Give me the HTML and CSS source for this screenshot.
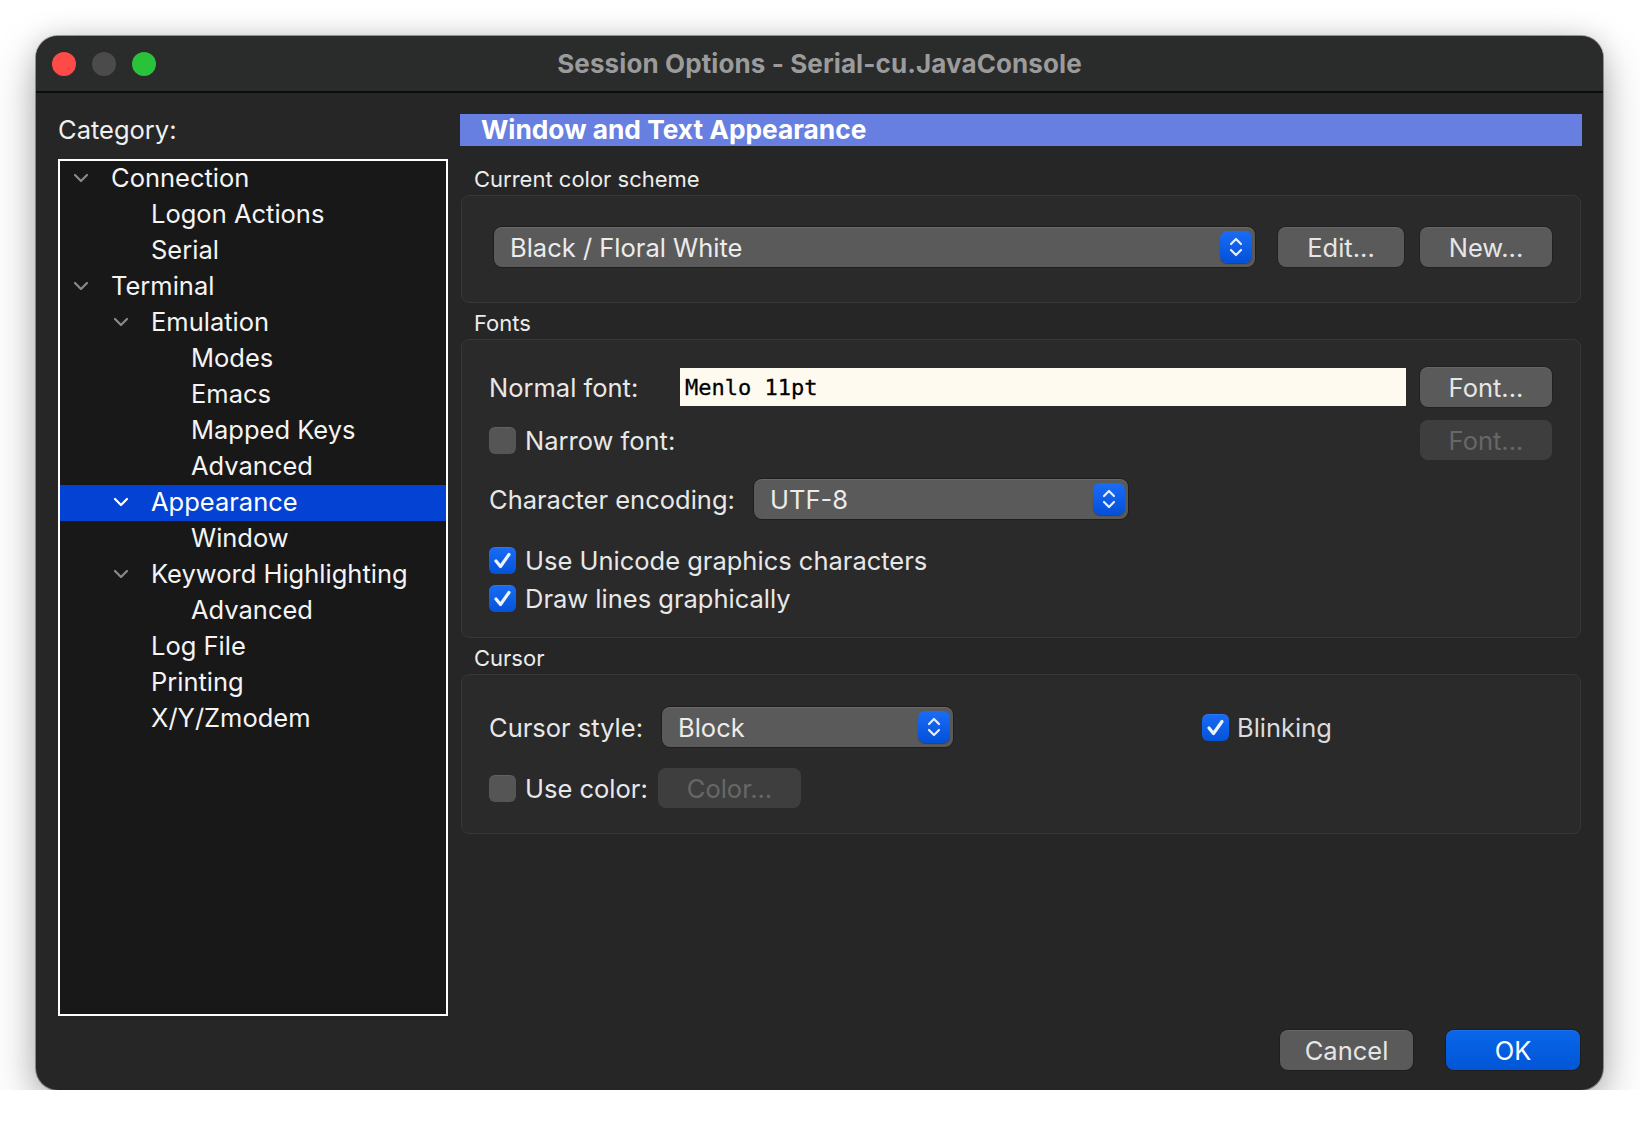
FILE: index.html
```html
<!DOCTYPE html>
<html lang="en">
<head>
  <meta charset="UTF-8">
  <title>Session Options - Serial-cu.JavaConsole</title>
  <link rel="stylesheet" href="styles.css">
</head>
<body>
  <div class="window">
    <div class="titlebar">
      <div class="lights">
        <span class="light close"></span>
        <span class="light min"></span>
        <span class="light zoom"></span>
      </div>
      <div class="title">Session Options - Serial-cu.JavaConsole</div>
      <div></div>
    </div>

    <div class="body">
      <div class="side">
        <div class="cat-label">Category:</div>
        <div class="tree">
          <div class="row lvl0"><svg class="chev" viewBox="0 0 16 10"><polyline points="2,2 8,8 14,2"/></svg>Connection</div>
          <div class="row lvl1"><span class="chev"></span>Logon Actions</div>
          <div class="row lvl1"><span class="chev"></span>Serial</div>
          <div class="row lvl0"><svg class="chev" viewBox="0 0 16 10"><polyline points="2,2 8,8 14,2"/></svg>Terminal</div>
          <div class="row lvl1"><svg class="chev" viewBox="0 0 16 10"><polyline points="2,2 8,8 14,2"/></svg>Emulation</div>
          <div class="row lvl2"><span class="chev"></span>Modes</div>
          <div class="row lvl2"><span class="chev"></span>Emacs</div>
          <div class="row lvl2"><span class="chev"></span>Mapped Keys</div>
          <div class="row lvl2"><span class="chev"></span>Advanced</div>
          <div class="row lvl1 selected"><svg class="chev" viewBox="0 0 16 10"><polyline points="2,2 8,8 14,2"/></svg>Appearance</div>
          <div class="row lvl2"><span class="chev"></span>Window</div>
          <div class="row lvl1"><svg class="chev" viewBox="0 0 16 10"><polyline points="2,2 8,8 14,2"/></svg>Keyword Highlighting</div>
          <div class="row lvl2"><span class="chev"></span>Advanced</div>
          <div class="row lvl1"><span class="chev"></span>Log File</div>
          <div class="row lvl1"><span class="chev"></span>Printing</div>
          <div class="row lvl1"><span class="chev"></span>X/Y/Zmodem</div>
        </div>
      </div>

      <div class="main">
        <div class="pane-head">Window and Text Appearance</div>

        <div class="group-label first">Current color scheme</div>
        <div class="group scheme">
          <div class="popup grow">
            Black / Floral White
            <svg class="stepper" viewBox="0 0 32 32"><polyline points="11,13 16,8 21,13"/><polyline points="11,19 16,24 21,19"/></svg>
          </div>
          <div class="btn edit">Edit...</div>
          <div class="btn new">New...</div>
        </div>

        <div class="group-label">Fonts</div>
        <div class="group fonts">
          <div class="line h40">
            <div class="lbl normal">Normal font:</div>
            <div class="field">Menlo 11pt</div>
            <div class="btn font">Font...</div>
          </div>
          <div class="line h40 narrow">
            <span class="check"></span><span class="lbl">Narrow font:</span>
            <div class="btn font disabled push">Font...</div>
          </div>
          <div class="line h40 encoding">
            <div class="lbl enc">Character encoding:</div>
            <div class="popup w-enc">
              UTF-8
              <svg class="stepper" viewBox="0 0 32 32"><polyline points="11,13 16,8 21,13"/><polyline points="11,19 16,24 21,19"/></svg>
            </div>
          </div>
          <div class="line h28 unicode">
            <span class="check on"><svg viewBox="0 0 27 27"><polyline points="7,14 11.5,19.5 20,7.5"/></svg></span><span class="lbl">Use Unicode graphics characters</span>
          </div>
          <div class="line h28 lines">
            <span class="check on"><svg viewBox="0 0 27 27"><polyline points="7,14 11.5,19.5 20,7.5"/></svg></span><span class="lbl">Draw lines graphically</span>
          </div>
        </div>

        <div class="group-label">Cursor</div>
        <div class="group cursor">
          <div class="line h40">
            <div class="lbl cstyle">Cursor style:</div>
            <div class="popup w-block">
              Block
              <svg class="stepper" viewBox="0 0 32 32"><polyline points="11,13 16,8 21,13"/><polyline points="11,19 16,24 21,19"/></svg>
            </div>
            <span class="check on blink"><svg viewBox="0 0 27 27"><polyline points="7,14 11.5,19.5 20,7.5"/></svg></span><span class="lbl soft">Blinking</span>
          </div>
          <div class="line h40 usecolor">
            <span class="check"></span><span class="lbl ucolor">Use color:</span>
            <div class="btn color disabled">Color...</div>
          </div>
        </div>

        <div class="actions">
          <div class="btn cancel">Cancel</div>
          <div class="btn primary ok">OK</div>
        </div>
      </div>
    </div>
  </div>
  <div class="watermark">CSDN @浪浪山上的搬砖工</div>
</body>
</html>
```

FILE: styles.css
```css
*{box-sizing:border-box;}
body{margin:0;background:#fff;font-family:Inter,"Noto Sans",sans-serif;color:#e8e8e8;}

/* window frame */
.window{margin:36px 0 0 36px;width:1567px;height:1054px;border-radius:22px;background:#262626;display:flex;flex-direction:column;overflow:hidden;box-shadow:0 0 0 1px rgba(0,0,0,.35),0 18px 46px rgba(0,0,0,.3),0 0 24px rgba(0,0,0,.12);}
.titlebar{height:57px;flex:none;background:#2a2b2b;border-bottom:2px solid #0b0b0b;display:grid;grid-template-columns:1fr auto 1fr;align-items:center;padding:0 16px;}
.lights{display:flex;gap:16px;}
.light{width:24px;height:24px;border-radius:50%;}
.close{background:#fe4b47;}
.min{background:#4b4b4b;}
.zoom{background:#2ac13b;}
.title{font-weight:700;font-size:26px;color:#9b9b9b;letter-spacing:.1px;}

.body{flex:1;display:flex;padding:21px 21px 20px 22px;}

/* category tree */
.side{width:390px;margin-right:12px;flex:none;}
.cat-label{font-size:25.5px;line-height:32px;margin-bottom:13px;color:#f0f0f0;}
.tree{height:857px;border:2px solid #fff;background:#181818;padding-top:0;}
.row{height:36px;display:flex;align-items:center;font-size:25.5px;line-height:32px;color:#f4f4f4;white-space:nowrap;padding-bottom:2px;}
.row .chev{width:16px;height:10px;flex:none;margin-right:22px;}
.chev polyline{fill:none;stroke:#8a8a8a;stroke-width:2.2;stroke-linecap:round;stroke-linejoin:round;}
.lvl0{padding-left:13px;}
.lvl1{padding-left:53px;}
.lvl2{padding-left:93px;}
.row.selected{background:#0342d3;color:#fff;}
.row.selected .chev polyline{stroke:#fff;}

/* options pane */
.main{flex:1;display:flex;flex-direction:column;}
.pane-head{height:32px;line-height:32px;background:#667fe0;color:#fff;font-weight:700;font-size:26.3px;padding-left:21px;}
.group-label{font-size:22px;line-height:26px;margin:7px 0 3px 14px;color:#ececec;}
.group-label.first{margin-top:20px;}
.group{margin:0 1px;border:1px solid #373737;border-radius:8px;background:#2a2a2a;}

.scheme{display:flex;align-items:center;padding:31px 28px 35px 32px;}
.fonts{padding:27px 28px 25px 27px;}
.cursor{padding:32px 28px 25px 27px;}

.line{display:flex;align-items:center;}
.h40{height:40px;}
.h28{height:28px;}
.narrow{margin-top:13px;}
.encoding{margin-top:19px;}
.unicode{margin-top:27px;}
.lines{margin-top:10px;}
.usecolor{margin-top:21px;}

.lbl{font-size:25.5px;color:#e8e8e8;white-space:nowrap;}
.lbl.soft{color:#dcdcdc;}
.normal{width:191px;flex:none;}
.enc{width:265px;flex:none;}
.cstyle{width:173px;flex:none;}
.ucolor{width:133px;flex:none;}

.popup{height:40px;border-radius:8px;background:#5a5a5a;display:flex;align-items:center;padding-left:16px;font-size:25.5px;color:#ececec;box-shadow:0 0 0 1px rgba(0,0,0,.28),inset 0 1px 0 rgba(255,255,255,.1);white-space:nowrap;}
.popup.grow{flex:1;margin-right:23px;}
.w-enc{width:374px;}
.w-block{width:291px;}
.stepper{margin-left:auto;margin-right:3px;width:32px;height:32px;border-radius:7px;background:linear-gradient(#1a6cf6,#0450d8);flex:none;box-shadow:0 1px 1px rgba(0,0,0,.3);}
.stepper polyline{fill:none;stroke:#e6eeff;stroke-width:2.2;stroke-linecap:round;stroke-linejoin:round;}

.btn{height:40px;border-radius:8px;background:#5a5a5a;color:#e6e6e6;font-size:25.5px;display:flex;align-items:center;justify-content:center;flex:none;box-shadow:0 0 0 1px rgba(0,0,0,.2),inset 0 1px 0 rgba(255,255,255,.08);}
.btn.disabled{background:#3e3e3e;color:#676767;box-shadow:none;}
.btn.primary{background:linear-gradient(#0a66ea,#0056d6);color:#fff;}
.edit{width:126px;}
.new{width:132px;margin-left:16px;}
.font{width:132px;}
.push{margin-left:auto;}
.color{width:143px;}
.cancel{width:133px;}
.ok{width:134px;}

.field{flex:1;height:38px;margin-right:14px;background:#fffaf0;color:#000;font-family:"DejaVu Sans Mono",monospace;font-size:22px;padding-left:5px;display:flex;align-items:center;-webkit-text-stroke:.3px #000;}

.check{width:27px;height:27px;border-radius:6px;background:#555;flex:none;margin-right:9px;box-shadow:inset 0 1px 0 rgba(255,255,255,.08);}
.check.on{background:linear-gradient(#1a6cf6,#0452d8);}
.check svg{width:27px;height:27px;display:block;}
.check polyline{fill:none;stroke:#eef4ff;stroke-width:3.2;stroke-linecap:round;stroke-linejoin:round;}
.blink{margin-left:249px;margin-right:8px;}

.actions{margin-top:auto;display:flex;justify-content:flex-end;gap:33px;padding-right:2px;}

.watermark{position:absolute;left:1393px;top:1093px;font-size:20px;line-height:26px;color:rgba(255,255,255,.75);font-family:"Noto Sans","Noto Sans CJK SC",sans-serif;white-space:nowrap;}
```
